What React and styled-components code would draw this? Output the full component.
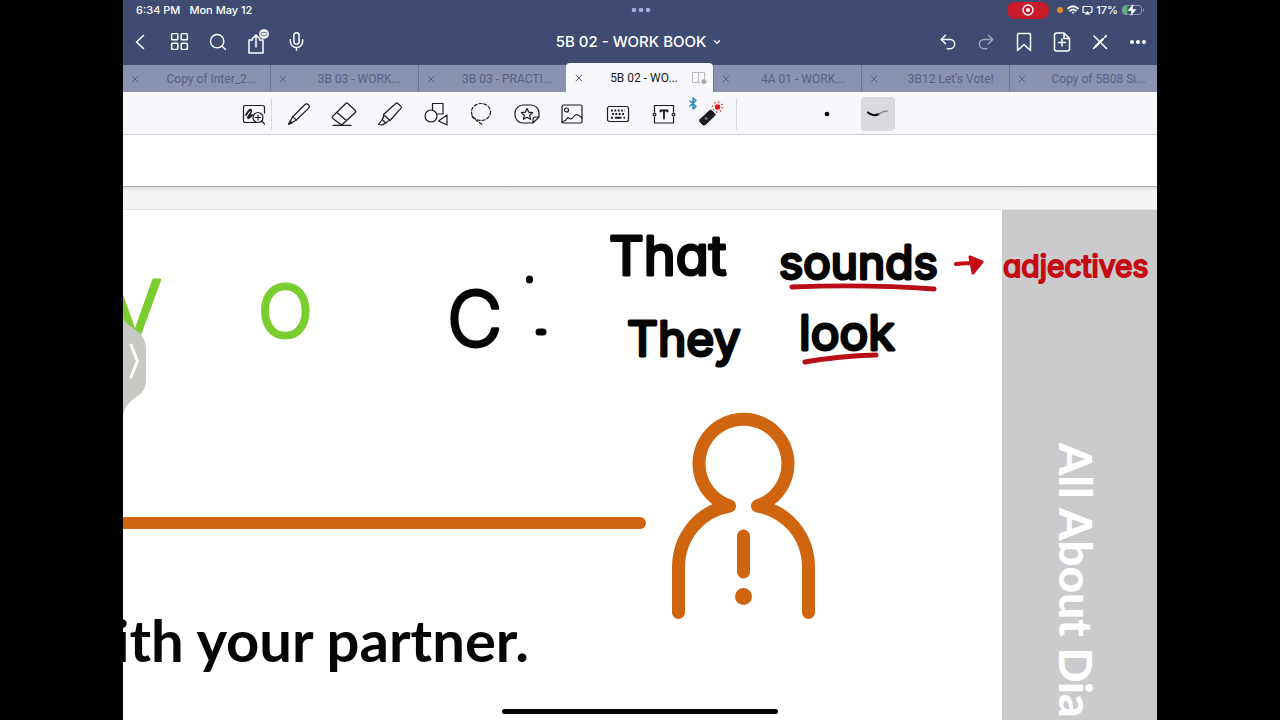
import { ChevronDown, LayoutGrid, Mic, Redo2, Search, Undo2 } from 'lucide-react'
import styled, { createGlobalStyle } from 'styled-components'

const GlobalStyle = createGlobalStyle`
  * { box-sizing: border-box; }
  body {
    margin: 0;
    background: #000;
    font-family: Inter, 'Liberation Sans', sans-serif;
  }
`

const Screen = styled.div`
  min-height: 100vh;
  display: flex;
  padding: 0 123px;
  background: #000;
`

const Tablet = styled.main`
  position: relative;
  flex: 1;
  min-width: 0;
  display: flex;
  flex-direction: column;
  overflow: hidden;
  background: #fff;
`

const Header = styled.header`
  background: #3f4b70;
  color: #fff;
`

const StatusBar = styled.div`
  display: grid;
  grid-template-columns: 1fr auto 1fr;
  align-items: center;
  height: 20px;
  padding: 0 12px 0 13px;
  font-size: 11px;
  font-weight: 500;
`

const StatusGroup = styled.div`
  display: flex;
  align-items: center;
  justify-content: ${props => props.$end ? 'flex-end' : 'flex-start'};
  gap: ${props => props.$gap}px;
`

const RecordPill = styled.span`
  display: flex;
  align-items: center;
  justify-content: center;
  width: 42px;
  height: 17px;
  border-radius: 8px;
  background: #c91c2b;
`

const NavBar = styled.nav`
  display: grid;
  grid-template-columns: 1fr auto 1fr;
  align-items: center;
  height: 43px;
  padding-right: 2px;
`

const NavGroup = styled.div`
  display: flex;
  justify-content: ${props => props.$end ? 'flex-end' : 'flex-start'};
  gap: ${props => props.$end ? 4 : 5}px;
`

const IconButton = styled.button`
  display: flex;
  align-items: center;
  justify-content: center;
  width: 34px;
  height: 34px;
  padding: 0;
  border: 0;
  border-radius: 4px;
  background: ${props => props.$active ? '#dbd9dd' : 'transparent'};
  color: inherit;
  opacity: ${props => props.$dim ? 0.5 : 1};
`

const DocTitle = styled.button`
  display: flex;
  align-items: center;
  gap: 6px;
  padding: 0;
  border: 0;
  background: none;
  color: #fff;
  font: 500 15px Inter, 'Liberation Sans', sans-serif;
`

const Tabs = styled.div`
  display: flex;
  align-items: flex-end;
  height: 29px;
`

const Tab = styled.div`
  flex: 1;
  min-width: 0;
  display: flex;
  align-items: center;
  height: ${props => props.$active ? 29 : 27}px;
  padding-left: 8px;
  border-left: 1px solid ${props => props.$active ? '#f8f7fb' : '#6f7699'};
  border-radius: ${props => props.$active ? '4px 4px 0 0' : '0'};
  background: ${props => props.$active ? '#f8f7fb' : '#8b91b0'};
  color: ${props => props.$active ? '#17171b' : '#5a6085'};
  &:first-child {
    border-left: 0;
  }
  > svg {
    margin-right: 6px;
  }
`

const TabClose = styled.button`
  display: flex;
  width: 8px;
  margin-right: 14px;
  padding: 0;
  border: 0;
  background: none;
  color: #5d6382;
`

const TabLink = styled.a`
  flex: 1;
  color: inherit;
  font: 12px/16px Roboto, 'Liberation Sans', sans-serif;
  text-align: center;
  text-decoration: none;
  white-space: nowrap;
`

const Toolbar = styled.div`
  display: flex;
  align-items: center;
  height: 43px;
  padding: 1px 0 0 114px;
  border-bottom: 1px solid #d0cfd3;
  background: #f8f7fb;
  color: #1b1b1e;
`

const Tools = styled.div`
  display: grid;
  grid-template-columns: repeat(10, 1fr);
  justify-items: center;
  width: 456px;
  margin: 0 4px;
`

const Divider = styled.span`
  width: 1px;
  height: 32px;
  background: #dddce1;
`

const PenOptions = styled.div`
  display: flex;
  gap: 17px;
  margin-left: 73px;
`

const PageEnd = styled.div`
  height: 52px;
  border-bottom: 1px solid #a9a9ac;
  background: #fff;
`

const PageGap = styled.div`
  height: 23px;
  border-bottom: 1px solid #e6e5e8;
  background: linear-gradient(#dededf, #f5f4f6 5px);
`

const Sheet = styled.section`
  position: relative;
  flex: 1;
  display: flex;
  overflow: hidden;
`

const SheetBody = styled.div`
  flex: 1;
  min-width: 0;
  padding-top: 204px;
`

const PromptRow = styled.div`
  display: flex;
  align-items: center;
  padding-right: 184px;
`

const PromptLine = styled.div`
  flex: 1;
  height: 12px;
  margin: 12px 24px 0 0;
  border-radius: 0 6px 6px 0;
  background: #d0650f;
`

const Instruction = styled.p`
  display: flex;
  justify-content: flex-end;
  width: 406px;
  margin: -12px 0 0;
  color: #050505;
  font: 700 58px/64px Lato, 'Open Sans', sans-serif;
  white-space: nowrap;
`

const SideBand = styled.aside`
  width: 155px;
  display: flex;
  justify-content: center;
  padding: 233px 8px 0 0;
  background: #cbcbcd;
`

const SideTitle = styled.h2`
  height: 0;
  margin: 0;
  color: #fff;
  font: 900 46px/56px Lato, 'Open Sans', sans-serif;
  writing-mode: vertical-rl;
  white-space: nowrap;
`

const InkLayer = styled.svg`
  position: absolute;
  inset: 0;
  width: 100%;
  height: 100%;
  pointer-events: none;
  font-family: Inter, 'Liberation Sans', sans-serif;
  font-weight: 400;
  font-feature-settings: 'cv11';
  stroke-linecap: round;
  stroke-linejoin: round;
`

const Handle = styled.button`
  position: absolute;
  left: 0;
  top: 108px;
  width: 24px;
  height: 98px;
  padding: 0;
  border: 0;
  background: none;
`

const HomeBar = styled.div`
  position: absolute;
  bottom: 6px;
  left: 50%;
  width: 276px;
  height: 5px;
  margin-left: -138px;
  border-radius: 3px;
  background: #000;
`

const Svg = ({ w = 24, h = 24, sw = 1.2, children, ...rest }) => (
  <svg width={w} height={h} viewBox={`0 0 ${w} ${h}`} fill='none' stroke='currentColor'
    strokeWidth={sw} strokeLinecap='round' strokeLinejoin='round' overflow='visible' aria-hidden='true' {...rest}>
    {children}
  </svg>
)

const tabs = [
  { title: 'Copy of Inter_2...' },
  { title: '3B 03 - WORK...' },
  { title: '3B 03 - PRACTI...' },
  { title: '5B 02 - WO...', active: true },
  { title: '4A 01 - WORK...' },
  { title: "3B12 Let's Vote!" },
  { title: 'Copy of 5B08 Si...' }
]

const tools = [
  {
    name: 'Pen',
    icon: <Svg>
      <path d='M3 20l2.500-5L17.500 3c1.200-1.200 3-1.300 4-.3s.9 2.700-.3 3.900L9 18.300 4 21z' />
      <path d='M5.500 15q2.500.5 3.500 3.300' /><path d='M1.500 22.500l1.500-3.500 2 2z' fill='currentColor' />
    </Svg>
  },
  {
    name: 'Eraser',
    icon: <Svg w={26}>
      <path d='M1.500 14.500L15 1.200q.8-.7 1.600 0l8 7.500q.8.800 0 1.600L11.500 22.200q-1 .8-2 0l-8-6q-.8-.8 0-1.700zM6 10.500l9.500 8M2 23.300h18' />
    </Svg>
  },
  {
    name: 'Highlighter',
    icon: <Svg>
      <path d='M5.500 12.500L18 1.300q.8-.7 1.600 0l3.500 3.300q.8.800 0 1.600L12 18.500zM5.500 12.500q.5 3-1.500 5l4 3.500q1.500-2.500 4-2.500M3.500 18.500l-3 4 4.500.3L7 21' />
    </Svg>
  },
  {
    name: 'Shapes',
    icon: <Svg>
      <circle cx='7' cy='14' r='6' /><path d='M8.500 8V1.500h10.500v10.500h-6M23 13v10l-8.500-4z' />
    </Svg>
  },
  {
    name: 'Lasso',
    icon: <Svg>
      <ellipse cx='12' cy='10' rx='9.500' ry='8.500' strokeDasharray='3 2' />
      <path d='M3 14c1 3 6 5 10 8.500' strokeDasharray='3 2' />
    </Svg>
  },
  {
    name: 'Sticker',
    icon: <Svg w={26}>
      <path d='M19 21H9a8 8 0 0 1-8-8v-2a8 8 0 0 1 8-8h8a8 8 0 0 1 8 8v4zM19 21v-3.500q0-2.500 2.500-2.500H25' />
      <path d='M13 6.500l1.700 3.700 4 .4-3 2.700.9 4-3.600-2.100-3.600 2.100.9-4-3-2.700 4-.4z' />
    </Svg>
  },
  {
    name: 'Image',
    icon: <Svg>
      <rect x='2' y='3' width='20' height='18' rx='1.500' /><circle cx='6.500' cy='8' r='2' />
      <path d='M2 20q4-1 6-4.500 3 2.500 4.500.5 2-3 4-3.500 2 .2 5.500 3.500' />
    </Svg>
  },
  {
    name: 'Keyboard',
    icon: <Svg>
      <rect x='1.500' y='4.500' width='21' height='15' rx='2' />
      <path d='M5 8.500h14M6 12h13' strokeWidth='2' strokeDasharray='1.800 1.600' strokeLinecap='butt' />
      <path d='M5 15.700h2M9 15.700h6.500M17.500 15.700h1.500' strokeWidth='2' strokeLinecap='butt' />
    </Svg>
  },
  {
    name: 'Text',
    icon: <Svg>
      <path d='M2.500 10V3.500h19V10M2.500 15v6h19v-6' /><circle cx='2.500' cy='12.500' r='1.400' /><circle cx='21.500' cy='12.500' r='1.400' />
      <path d='M8.500 9.500V8.500h7v1M12 8.500v8' strokeWidth='1.800' />
    </Svg>
  },
  {
    name: 'Laser pointer',
    icon: <Svg w={34} h={34}>
      <path d='M-2 4l6 5.500L1 12V1L4 3.500-2 9' stroke='#1e87b5' strokeWidth='1.400' />
      <path d='M8.200 22.300l9.500-8.800q1-.8 2 .2l3 3q1 1 0 2l-9.200 8.800q-1.500 1.200-3 0l-2.300-2.300q-1.300-1.500 0-2.900z' fill='#1b1b1e' stroke='#1b1b1e' strokeWidth='1' />
      <circle cx='14' cy='21.500' r='1' stroke='#8b8b90' strokeWidth='1' />
      <circle cx='25.500' cy='10' r='2.700' fill='#dc1828' stroke='none' />
      <circle cx='25.500' cy='10' r='4.900' stroke='#dc3540' strokeWidth='1.600' strokeDasharray='1.200 2.648' strokeLinecap='butt' />
    </Svg>
  }
]

const StatusIcons = () => (
  <>
    <RecordPill>
      <Svg w={12} h={12} sw={1.4}>
        <circle cx='6' cy='6' r='5' /><circle cx='6' cy='6' r='2' fill='currentColor' stroke='none' />
      </Svg>
    </RecordPill>
    <Svg w={12} h={6}><circle cx='8' cy='3' r='3' fill='#e28b26' stroke='none' /></Svg>
    <Svg w={12} h={10} sw={1.7}>
      <path d='M1 3.500q5-4.500 10 0M3 5.800q3-2.600 6 0' /><path d='M4.500 7.300q1.500-1 3 0L6 9z' fill='currentColor' stroke='none' />
    </Svg>
    <Svg w={11} h={10} sw={1.2}>
      <path d='M3 7.500H2q-1 0-1-1v-4q0-1 1-1h7q1 0 1 1v4q0 1-1 1H8' /><path d='M5.500 6l3 3.500h-6z' fill='currentColor' stroke='none' />
    </Svg>
    17%
    <Svg w={24} h={12} sw={1}>
      <rect x='1.500' y='1.500' width='19' height='9' rx='3' stroke='#8b93ad' />
      <path d='M5.500 2.500H4.500a2 2 0 0 0-2 2v3a2 2 0 0 0 2 2h1z' fill='#4fbf6b' stroke='#4fbf6b' />
      <path d='M22.500 5v2' stroke='#8b93ad' />
      <path d='M12.500 0L6.500 6.700h4L9.500 12l6-6.800h-4z' fill='#fff' stroke='none' />
    </Svg>
  </>
)

const Ink = () => (
  <InkLayer fontSize='46'>
    <g fill='#79cd2f' stroke='#79cd2f' strokeWidth='3' fontWeight='300'>
      <text x='-15' y='128' fontSize='80'>V</text>
      <text x='135' y='127' fontSize='72'>O</text>
    </g>
    <g fill='#050505' stroke='#050505' strokeWidth='3'>
      <text x='324' y='136' fontSize='76' fontWeight='300'>C</text>
      <text x='486' y='65' fontSize='54'>That</text>
      <text x='656' y='69'>sounds</text>
      <text x='504' y='146' fontSize='48'>They</text>
      <text x='676' y='140' fontSize='48'>look</text>
    </g>
    <g fill='none' stroke='#050505' strokeWidth='7'>
      <path d='M406.500 69v1M416 122h4' />
    </g>
    <g fill='none' stroke='#b90d18' strokeWidth='5'>
      <path d='M669 77q74-3 142 2M682 152q34-6 71-7' />
    </g>
    <g fill='#c50b13' stroke='#c50b13' strokeWidth='4'>
      <path d='M833 54q12-1 20-1' fill='none' /><path d='M847 47l12 5-9 11z' strokeWidth='3' />
    </g>
    <text x='880' y='67' fontSize='30' fill='#c50b13' stroke='#c50b13' strokeWidth='2'>adjectives</text>
  </InkLayer>
)

const Person = () => (
  <Svg w={148} h={206} sw={13} stroke='#d0650f'>
    <path d='M8.500 198.500V154C8.500 122 30 97 59.500 92A44.500 44.500 0 1 1 87.500 92C117 97 138.500 122 138.500 154V198.500M73.500 122v36' />
    <circle cx='73.500' cy='182.500' r='8.500' fill='#d0650f' stroke='none' />
  </Svg>
)

const App = () => (
  <>
    <GlobalStyle />
    <Screen>
      <Tablet>
        <Header>
          <StatusBar>
            <StatusGroup $gap={9}><span>6:34 PM</span><span>Mon May 12</span></StatusGroup>
            <Svg w={20} h={6} fill='#a3b3dd' stroke='none'>
              <circle cx='3' cy='3' r='2.300' /><circle cx='10' cy='3' r='2.300' /><circle cx='17' cy='3' r='2.300' />
            </Svg>
            <StatusGroup $end $gap={3}><StatusIcons /></StatusGroup>
          </StatusBar>
          <NavBar>
            <NavGroup>
              <IconButton aria-label='Back'><Svg w={10} h={16} sw={1.6}><path d='M8.500 1.500L1.500 8l7 6.500' /></Svg></IconButton>
              <IconButton aria-label='Thumbnails'><LayoutGrid size={21} strokeWidth={1.7} /></IconButton>
              <IconButton aria-label='Search'><Search size={20} strokeWidth={1.7} /></IconButton>
              <IconButton aria-label='Share'>
                <Svg w={26} h={28} sw={1.5}>
                  <path d='M8.500 12H5v13h14V12h-3.500M12 19V7M8.500 10.500L12 7l3.500 3.500' />
                  <circle cx='20' cy='6' r='5' fill='#eceef5' stroke='none' />
                  <rect x='17' y='4.500' width='6' height='3' rx='1' stroke='#8188a0' strokeWidth='1' />
                </Svg>
              </IconButton>
              <IconButton aria-label='Record audio'><Mic size={21} strokeWidth={1.7} /></IconButton>
            </NavGroup>
            <DocTitle>5B 02 - WORK BOOK <ChevronDown size={10} strokeWidth={3} /></DocTitle>
            <NavGroup $end>
              <IconButton aria-label='Undo'><Undo2 size={20} strokeWidth={1.7} /></IconButton>
              <IconButton aria-label='Redo' $dim><Redo2 size={20} strokeWidth={1.7} /></IconButton>
              <IconButton aria-label='Bookmark'>
                <Svg w={16} h={20} sw={1.5}><path d='M1.500 2.500q0-1 1-1h11q1 0 1 1v16L8 12.500l-6.500 6z' /></Svg>
              </IconButton>
              <IconButton aria-label='Add page'>
                <Svg w={18} h={20} sw={1.5}>
                  <path d='M11 1H3.500q-2 0-2 2v14q0 2 2 2h11q2 0 2-2V6.500zM11 1v5.500h5.500M9 7v7M5.500 10.500h7' />
                </Svg>
              </IconButton>
              <IconButton aria-label='Read-only mode'>
                <Svg w={16} h={16} sw={1.5}><path d='M2 2l12.500 12.500M1.500 14.500L11 5' /><path d='M3.500 12.500L11 5M13 3l1-1' strokeWidth='2.200' /></Svg>
              </IconButton>
              <IconButton aria-label='More'>
                <Svg w={18} h={6} fill='currentColor' stroke='none'>
                  <circle cx='3' cy='3' r='2' /><circle cx='9' cy='3' r='2' /><circle cx='15' cy='3' r='2' />
                </Svg>
              </IconButton>
            </NavGroup>
          </NavBar>
          <Tabs>
            {tabs.map(tab => (
              <Tab key={tab.title} $active={tab.active}>
                <TabClose aria-label={`Close ${tab.title}`}><Svg w={8} h={8} sw={1}><path d='M1 1l6 6M7 1L1 7' /></Svg></TabClose>
                <TabLink href='#'>{tab.title}</TabLink>
                {tab.active && <Svg w={16} h={14} sw={1} stroke='#b9b9c0'>
                  <path d='M9 11.500H1.500v-10h12V7M7.500 1.500v10' /><circle cx='13' cy='10.500' r='2.500' fill='#aaaab2' stroke='none' />
                </Svg>}
              </Tab>
            ))}
          </Tabs>
        </Header>

        <Toolbar>
          <IconButton aria-label='Zoom window'>
            <Svg>
              <path d='M14 20.500H3.500q-2 0-2-2v-13q0-2 2-2h17q2 0 2 2V11' />
              <path d='M4 13q4-7 5-5t-3 7q-.5 2 2 0l2-2' strokeWidth='1.800' />
              <circle cx='16' cy='15.500' r='5' /><path d='M19.500 19l3 3M16 13v5M13.500 15.500h5' />
            </Svg>
          </IconButton>
          <Divider />
          <Tools>
            {tools.map(tool => <IconButton key={tool.name} aria-label={tool.name}>{tool.icon}</IconButton>)}
          </Tools>
          <Divider />
          <PenOptions>
            <IconButton aria-label='Stroke size'><Svg w={6} h={6}><circle cx='3' cy='3' r='2.300' fill='#000' stroke='none' /></Svg></IconButton>
            <IconButton aria-label='Stroke style' $active>
              <Svg w={24} h={10} sw={2}>
                <path d='M2 3.500q5 4.500 11 1.500' stroke='#000' /><path d='M12.500 5.300q5-3.500 9-3.300' stroke='#8d8c91' strokeWidth='1.500' />
              </Svg>
            </IconButton>
          </PenOptions>
        </Toolbar>

        <PageEnd />
        <PageGap />
        <Sheet>
          <SheetBody>
            <PromptRow>
              <PromptLine />
              <Person />
            </PromptRow>
            <Instruction>ith your partner.</Instruction>
          </SheetBody>
          <SideBand><SideTitle>All About Dia</SideTitle></SideBand>
          <Ink />
          <Handle aria-label='Open side panel'>
            <Svg w={24} h={98}>
              <path d='M0 0C4 10 23 12 23 30v32C23 82 4 76 0 98z' fill='#c6c9c4' stroke='none' />
              <path d='M8 27l6.500 16L8 59' stroke='#fff' strokeWidth='3' />
            </Svg>
          </Handle>
        </Sheet>
        <HomeBar />
      </Tablet>
    </Screen>
  </>
)

export default App
